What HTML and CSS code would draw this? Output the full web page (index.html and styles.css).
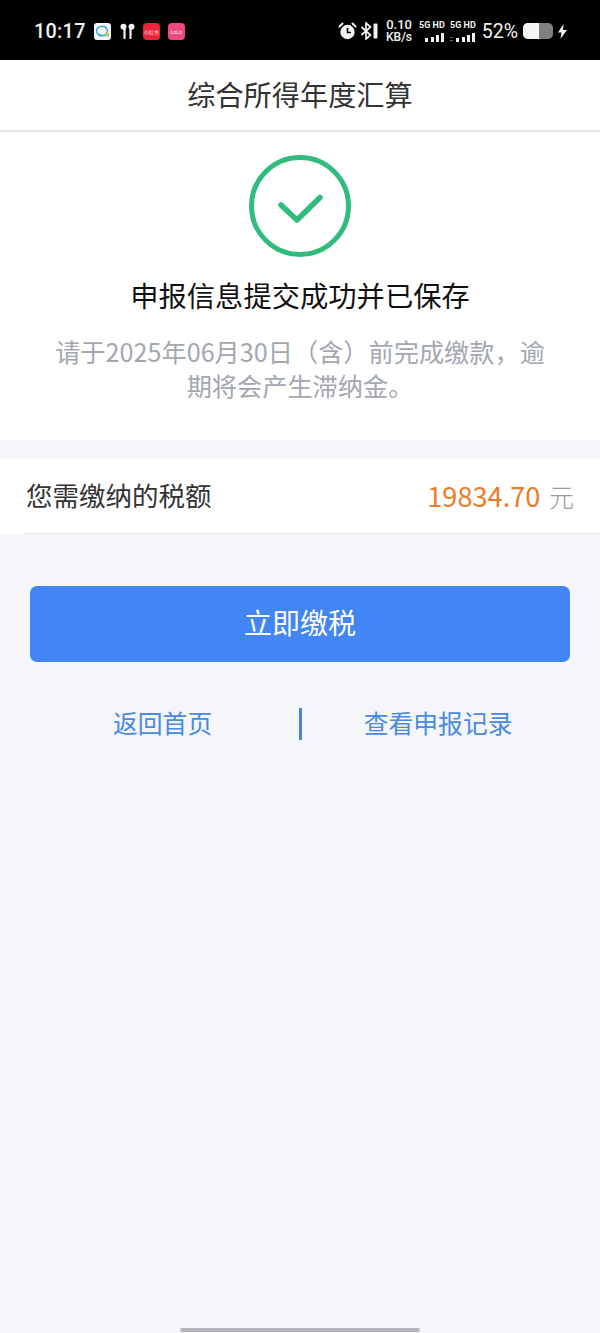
FILE: index.html
```html
<!DOCTYPE html>
<html lang="zh-CN">
<head>
<meta charset="UTF-8">
<meta name="viewport" content="width=device-width, initial-scale=1.0">
<title>综合所得年度汇算</title>
<link rel="stylesheet" href="styles.css">
</head>
<body>
<div class="status-bar">
  <div class="status-left">
    <span class="clock">10:17</span>
    <svg class="app-icon" width="17" height="17" viewBox="0 0 17 17">
      <rect width="17" height="17" rx="3" fill="#f4f8fa"/>
      <ellipse cx="8" cy="8" rx="5.500" ry="4.800" fill="none" stroke="#3a9be0" stroke-width="1.400"/>
      <path d="M5 13l2-1.500" stroke="#3a9be0" stroke-width="1.400"/>
      <circle cx="13" cy="11.500" r="2.200" fill="#a8cf6a"/>
    </svg>
    <svg class="pods" width="15" height="16" viewBox="0 0 15 16">
      <circle cx="3.500" cy="3.800" r="3" fill="#f2f2f2"/>
      <circle cx="11.500" cy="3.800" r="3" fill="#f2f2f2"/>
      <path d="M4.500 4v11M10.500 4v11" stroke="#f2f2f2" stroke-width="2.200" stroke-linecap="round"/>
    </svg>
    <span class="app-badge badge-red">小红书</span>
    <span class="app-badge badge-pink">LoLa</span>
  </div>
  <div class="status-right">
    <svg class="alarm" width="19" height="18" viewBox="0 0 19 18">
      <circle cx="9.500" cy="10" r="7.200" fill="#f2f2f2"/>
      <path d="M9.500 6v4.500h3.500" fill="none" stroke="#000" stroke-width="1.600"/>
      <path d="M1.500 4.500l3-3M17.500 4.500l-3-3" stroke="#f2f2f2" stroke-width="2" stroke-linecap="round"/>
    </svg>
    <svg class="bt" width="19" height="18" viewBox="0 0 19 18">
      <path d="M1.500 5l9 8-4.500 4V1l4.500 4-9 8" fill="none" stroke="#f2f2f2" stroke-width="1.700"/>
      <rect x="13.500" y="1.500" width="4" height="15" rx="1.200" fill="#f2f2f2"/>
    </svg>
    <div class="net-speed"><span>0.10</span><span>KB/s</span></div>
    <div class="sim">
      <span class="sim-label">5G HD</span>
      <svg width="22" height="9" viewBox="0 0 22 9"><path d="M2 5h3v4H2zM8 4h3v5H8zM13 2h3v7h-3zM18 0h3v9h-3z" fill="#f2f2f2"/></svg>
    </div>
    <div class="sim">
      <span class="sim-label">5G HD</span>
      <svg width="26" height="9" viewBox="0 0 26 9"><path d="M0 4h3v1H0zM0 7h3v1H0z" fill="#666"/><path d="M6 5h3v4H6zM12 4h3v5h-3zM17 2h3v7h-3zM22 0h3v9h-3z" fill="#f2f2f2"/></svg>
    </div>
    <span class="battery-pct">52%</span>
    <div class="battery"><div class="battery-level"></div></div>
    <svg width="9" height="15" viewBox="0 0 9 15"><path d="M5.500 0L0 8.500h3.500L2.500 15 9 6H5z" fill="#f2f2f2"/></svg>
  </div>
</div>

<div class="page-title">综合所得年度汇算</div>

<div class="result">
  <svg class="result-icon" width="102" height="102" viewBox="0 0 102 102">
    <circle cx="51" cy="51" r="48.500" fill="none" stroke="#2fbc7d" stroke-width="5"/>
    <path d="M32 50L48 65 71 42.500" fill="none" stroke="#2fbc7d" stroke-width="5.500" stroke-linecap="round" stroke-linejoin="round"/>
  </svg>
  <h1 class="result-title">申报信息提交成功并已保存</h1>
  <p class="result-note">请于2025年06月30日（含）前完成缴款，逾期将会产生滞纳金。</p>
</div>

<div class="tax-row">
  <span class="tax-label">您需缴纳的税额</span>
  <span class="tax-value"><span class="tax-amount">19834.70</span> <span class="tax-unit">元</span></span>
</div>

<div class="actions">
  <button class="pay-btn" type="button">立即缴税</button>
  <div class="links">
    <a class="link link-home">返回首页</a>
    <span class="link-sep"></span>
    <a class="link link-records">查看申报记录</a>
  </div>
</div>

<div class="home-bar"></div>
</body>
</html>
```

FILE: styles.css
```css
* {
  box-sizing: border-box;
}
html, body {
  margin: 0;
  padding: 0;
}
body {
  position: relative;
  width: 600px;
  height: 1333px;
  overflow: hidden;
  background-color: #f4f6fa;
  font-family: "Noto Sans CJK SC", "Roboto", sans-serif;
  color: #222;
}

/* status bar */
.status-bar {
  display: flex;
  justify-content: space-between;
  align-items: center;
  height: 60px;
  padding: 2px 33px 0 34px;
  background-color: #000;
  color: #f2f2f2;
  font-family: "Roboto", sans-serif;
}
.status-left, .status-right {
  display: flex;
  align-items: center;
}
.clock {
  font-size: 19.800px;
  font-weight: 500;
  margin-right: 8px;
  letter-spacing: 0.3px;
}
.pods {
  margin: 0 8px 0 9px;
}
.app-badge {
  display: flex;
  align-items: center;
  justify-content: center;
  width: 17px;
  height: 17px;
  border-radius: 4px;
  color: #fff;
  font-family: "Noto Sans CJK SC", sans-serif;
  font-size: 5px;
  white-space: nowrap;
}
.badge-red {
  background-color: #ee2238;
  margin-right: 8px;
}
.badge-pink {
  background-color: #ea4a7e;
}
.bt {
  margin: 0 7px 0 3px;
}
.net-speed {
  display: flex;
  flex-direction: column;
  align-items: center;
  font-size: 12px;
  font-weight: 500;
  line-height: 12px;
  margin-right: 7px;
}
.net-speed span:first-child {
  font-size: 13px;
}
.sim {
  display: flex;
  flex-direction: column;
  align-items: flex-end;
  margin-right: 5px;
}
.sim-label {
  font-size: 9px;
  line-height: 11px;
  font-weight: 700;
  margin-bottom: 2px;
  white-space: nowrap;
}
.battery-pct {
  font-size: 19.500px;
  margin: 0 5px 0 1px;
}
.battery {
  width: 30px;
  height: 16px;
  border-radius: 5px;
  background-color: #808080;
  overflow: hidden;
  margin-right: 5px;
}
.battery-level {
  width: 16px;
  height: 16px;
  background-color: #f5f5f5;
}

/* header */
.page-title {
  height: 72px;
  background-color: #fff;
  border-bottom: 2px solid #e4e5e8;
  font-size: 28.200px;
  line-height: 67px;
  text-align: center;
  color: #333;
}

/* result block */
.result {
  display: flex;
  flex-direction: column;
  align-items: center;
  height: 308px;
  padding-top: 23px;
  background-color: #fff;
}
.result-title {
  margin: 18px 0 0;
  font-size: 28.300px;
  line-height: 40px;
  font-weight: 400;
  color: #111;
}
.result-note {
  width: 500px;
  margin: 19px 0 0;
  font-size: 25.200px;
  line-height: 34px;
  text-align: center;
  color: #a3a7af;
}

/* tax row */
.tax-row {
  display: flex;
  justify-content: space-between;
  align-items: center;
  height: 75px;
  margin-top: 19px;
  padding: 0 26px 4px 26px;
  background-color: #fff;
  position: relative;
}
.tax-row::after {
  content: "";
  position: absolute;
  left: 24px;
  right: 0;
  bottom: 0;
  height: 1px;
  background-color: #e8e9ec;
}
.tax-label {
  font-size: 26.500px;
  color: #333;
}
.tax-amount {
  font-size: 27.200px;
  color: #ee7a26;
}
.tax-unit {
  font-size: 25px;
  font-weight: 300;
  color: #95989e;
  margin-left: 5px;
}

/* actions */
.actions {
  padding: 52px 30px 0;
}
.pay-btn {
  display: block;
  width: 100%;
  height: 76px;
  padding: 0 0 4px;
  border: 0;
  border-radius: 7px;
  background-color: #4285f4;
  color: #fff;
  font-family: inherit;
  font-size: 28px;
}
.links {
  display: flex;
  align-items: center;
  height: 32px;
  margin-top: 46px;
}
.link {
  margin-bottom: 4px;
  color: #4a8adf;
  font-size: 24.800px;
  white-space: nowrap;
}
.link-home {
  margin-left: 83px;
}
.link-sep {
  width: 2.500px;
  height: 32px;
  margin-left: 87px;
  background-color: #4a86d0;
}
.link-records {
  margin-left: 62px;
}

.home-bar {
  position: absolute;
  left: 180px;
  bottom: 1px;
  width: 240px;
  height: 4px;
  border-radius: 2px;
  background-color: #b4b5b9;
}
```
